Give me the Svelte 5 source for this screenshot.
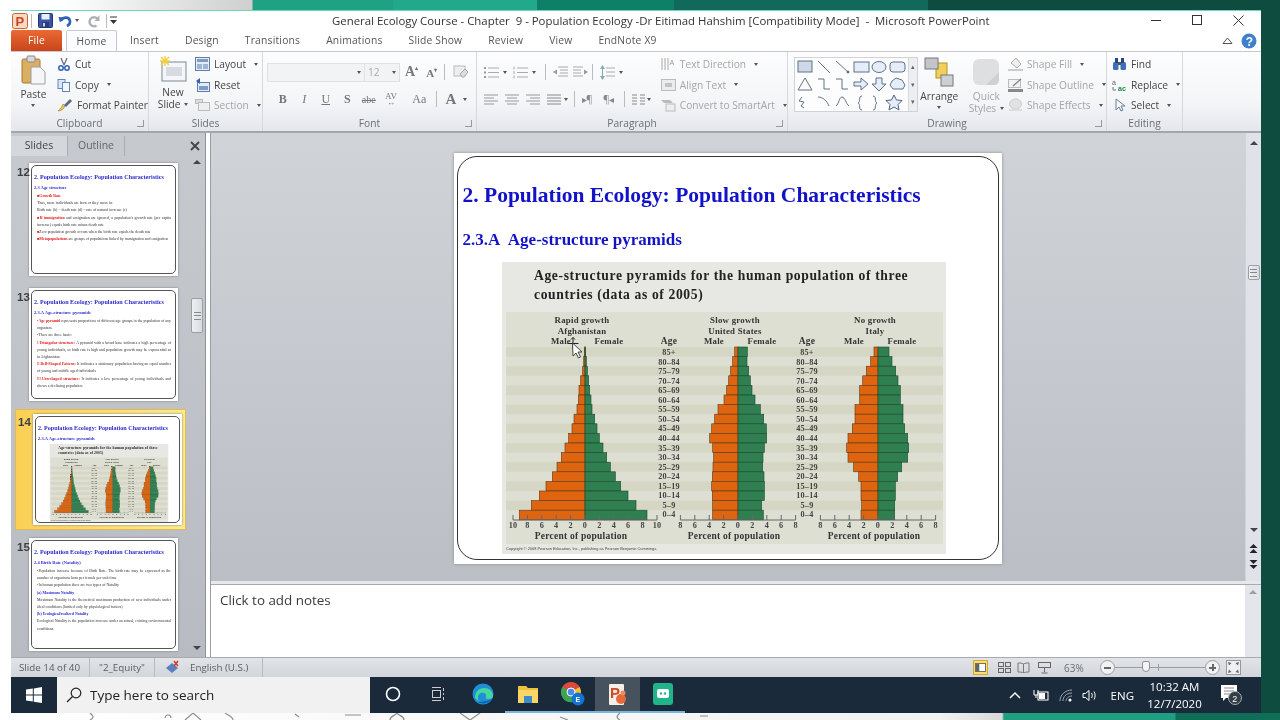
<script>
  const ages = ["85+","80–84","75–79","70–74","65–69","60–64","55–59","50–54","45–49","40–44","35–39","30–34","25–29","20–24","15–19","10–14","5–9","0–4"];
  // bar half widths in px, top row first
  const pyramids = [
    { cx: 83, span: 5, title: "Rapid growth", place: "Afghanistan",
      male: [0.7,1.3,2.3,4.3,6,6.7,8,11,13,16.3,20,23.7,28,32.7,39,45.7,53.7,65.7],
      female: [0.7,1.3,2.3,3.7,4.7,6,7,9.7,12,14.3,18,21.7,25.3,30.3,35.7,43,51,62] },
    { cx: 236, span: 4, title: "Slow growth", place: "United States",
      male: [3.3,5.3,7.3,9.3,11.3,14,20,23.3,26.3,28.3,25.3,24.3,25,25.7,26.3,25.7,25.3,25.3],
      female: [9.3,9,10.7,12.3,14,17,22.3,25.7,28.3,28.7,26.3,25,24.7,26,26.3,26.3,23.7,25.3] },
    { cx: 376, span: 4, title: "No growth", place: "Italy",
      male: [4,7.3,11.7,15.3,18.3,18.3,23,23,25.7,30,31.3,30,24.3,19.3,17,17,16.3,17],
      female: [11,14,17.7,20,22.3,22.3,25,25,26.7,29.7,30.7,29.7,23.7,19.7,17.3,17.3,16.7,16.7] }
  ];
  const ageCols = [167, 305];

  const tabs = ["Insert","Design","Transitions","Animations","Slide Show","Review","View","EndNote X9"];

  const thumbs = [
    { n: 12, sub: "2.3 Age structure", paras: [
      { b: "■", red: "Growth Rate", t: "" },
      { t: "Thus, more individuals are born or they move in." },
      { t: "Birth rate (b) − death rate (d) = rate of natural increase (r)" },
      { b: "■", red: "If immigration", t: " and emigration are ignored, a population's growth rate (per capita increase) equals birth rate minus death rate" },
      { b: "■", t: "Zero population growth occurs when the birth rate equals the death rate" },
      { b: "■", red: "Metapopulations", t: " are groups of populations linked by immigration and emigration" }
    ]},
    { n: 13, sub: "2.3.A Age-structure pyramids", paras: [
      { b: "•", red: "Age pyramid", t: " represents proportions of different age groups in the population of any organism." },
      { b: "•", t: "There are three basic:" },
      { b: "I.", red: "Triangular structure:", t: " A pyramid with a broad base indicates a high percentage of young individuals, so birth rate is high and population growth may be exponential as in Afghanistan" },
      { b: "II.", red: "Bell-Shaped Pattern:", t: " It indicates a stationary population having an equal number of young and middle aged individuals" },
      { b: "III.", red: "Urn-shaped structure:", t: " It indicates a low percentage of young individuals and shows a declining population" }
    ]},
    { n: 14, sub: "2.3.A Age-structure pyramids", active: true },
    { n: 15, sub: "2.4 Birth Rate (Natality)", paras: [
      { b: "•", t: "Population increase because of Birth Rate. The birth rate may be expressed as the number of organisms born per female per unit time" },
      { b: "•", t: "In human population there are two types of Natality" },
      { blue: "(a) Maximum Natality", t: "" },
      { t: "Maximum Natality is the theoretical maximum production of new individuals under ideal conditions (limited only by physiological factors)" },
      { blue: "(b) Ecological/realized Natality", t: "" },
      { t: "Ecological Natality is the population increase under an actual, existing environmental conditions." }
    ]}
  ];
</script>

{#snippet chart(cursor)}
  <svg class="chart" viewBox="0 0 444 292">
    <rect width="444" height="292" fill="#e7e7e4" />
    <rect x="4" y="50" width="437" height="232" fill="#dedfd3" />
    {#each ages as _, i}
      {#if i % 2 === 0}
        <rect x="4" y={85 + i * 9.6} width="437" height="9.6" fill="#d5d6c4" />
      {/if}
    {/each}
    <text class="cap" x="32" y="18">Age-structure pyramids for the human population of three</text>
    <text class="cap" x="32" y="37">countries (data as of 2005)</text>
    {#each pyramids as p}
      <text class="lbl" x={p.cx - 3} y="61" text-anchor="middle">{p.title}</text>
      <text class="lbl" x={p.cx - 3} y="71.5" text-anchor="middle">{p.place}</text>
      <text class="lbl" x={p.cx - 24} y="82" text-anchor="middle">Male</text>
      <text class="lbl" x={p.cx + 24} y="82" text-anchor="middle">Female</text>
      {#each ages as _, i}
        <rect x={p.cx - p.male[i]} y={85 + i * 9.6} width={p.male[i]} height="9.6" fill="#df6410" stroke="#5a3a18" stroke-width=".6" />
        <rect x={p.cx} y={85 + i * 9.6} width={p.female[i]} height="9.6" fill="#2f7f50" stroke="#1d4a30" stroke-width=".6" />
      {/each}
      <path d="M{p.cx - p.span * 14.4} 258H{p.cx + p.span * 14.4}" stroke="#666" stroke-width="1" />
      {#each Array(p.span * 2 + 1) as _, k}
        <path d="M{p.cx + (k - p.span) * 14.4} 253V258" stroke="#666" stroke-width="1" />
        <text class="tick" x={p.cx + (k - p.span) * 14.4} y="265.5" text-anchor="middle">{Math.abs(k - p.span) * 2}</text>
      {/each}
      <text class="lbl pct" x={p.cx - 4} y="277" text-anchor="middle">Percent of population</text>
    {/each}
    {#each ageCols as x}
      <text class="lbl age" {x} y="82" text-anchor="middle">Age</text>
      {#each ages as a, i}
        <text class="tick" {x} y={93 + i * 9.55} text-anchor="middle">{a}</text>
      {/each}
    {/each}
    <text class="copy" x="4" y="288">Copyright © 2008 Pearson Education, Inc., publishing as Pearson Benjamin Cummings.</text>
    {#if cursor}
      <path d="M71 81.5v-6l-2 2M71 75.5l2 2M71 81.5v5.5M65.5 81.5h11" stroke="#222" stroke-width="1" fill="none" />
      <path d="M70.5 81l.5 13 3-3 2.5 5 2-1-2.5-5h4z" fill="#fff" stroke="#333" stroke-width=".9" />
    {/if}
  </svg>
{/snippet}

{#snippet thumb(t)}
  <div class="thumb-row" class:active={t.active}>
    <span class="num">{t.n}</span>
    <div class="mini">
      <div class="mini-in">
        <p class="mini-title">2. Population Ecology: Population Characteristics</p>
        <p class="mini-sub">{t.sub}</p>
        {#if t.active}
          <div class="mini-chart">{@render chart(false)}</div>
        {:else}
          <div class="mini-body">
            {#each t.paras as p}
              <p>{#if p.b}<i>{p.b}</i> {/if}{#if p.red}<span class="r">{p.red}</span>{/if}{#if p.blue}<span class="bl">{p.blue}</span>{/if}{p.t}</p>
            {/each}
          </div>
        {/if}
      </div>
    </div>
  </div>
{/snippet}

{#snippet caret()}<span class="caret"></span>{/snippet}

<div class="screen">
  <div class="wall-top"></div>
  <div class="gutter"></div>

  <div class="win">
    <header class="titlebar">
      <div class="qat">
        <svg width="16" height="16" viewBox="0 0 16 16"><rect x=".5" y=".5" width="15" height="15" rx="2" fill="#f6d9c6" stroke="#d2622a"/><text x="3.5" y="13" class="plogo">P</text></svg>
        <i class="vsep"></i>
        <svg class="q-save" width="15" height="15" viewBox="0 0 15 15"><rect x=".5" y=".5" width="14" height="14" rx="1" fill="#3a55a8" stroke="#23366f"/><rect x="3.5" y="1" width="8" height="5.5" fill="#e9eef7"/><rect x="4" y="9" width="7" height="5.5" fill="#2a3c78"/><rect x="5" y="10" width="2" height="3.5" fill="#c9d3ea"/></svg>
        <svg class="q-undo" width="14" height="14" viewBox="0 0 14 14"><path d="M3 7c1-4 8-5 9 0 .4 2.500-1 4-3 5" fill="none" stroke="#2c62b8" stroke-width="2.600"/><path d="M.5 3l6 .5-4.500 5z" fill="#2c62b8"/></svg>
        {@render caret()}
        <svg class="q-redo" width="14" height="14" viewBox="0 0 14 14"><path d="M11 5.500A4.500 4.500 0 1 0 9.500 11.500" fill="none" stroke="#aeb2b6" stroke-width="2.400"/><path d="M12.500 1v6h-5z" fill="#aeb2b6"/></svg>
        <i class="vsep s2"></i>
        <svg class="q-cust" width="8" height="9" viewBox="0 0 8 9"><path d="M0 1h7" stroke="#333"/><path d="M0 4h7L3.500 8z" fill="#333"/></svg>
      </div>
      <div class="doc-title">General Ecology Course - Chapter &nbsp;9 - Population Ecology -Dr Eitimad Hahshim [Compatibility Mode] &nbsp;- &nbsp;Microsoft PowerPoint</div>
      <div class="winbtns">
        <svg width="11" height="11" viewBox="0 0 11 11"><path d="M0 5.500h10" stroke="#333"/></svg>
        <svg width="11" height="11" viewBox="0 0 11 11"><rect x=".5" y=".5" width="9" height="9" fill="none" stroke="#333"/></svg>
        <svg width="11" height="11" viewBox="0 0 11 11"><path d="M.5.500l10 10M10.500.500l-10 10" stroke="#333"/></svg>
      </div>
    </header>

    <nav class="tabbar">
      <span class="file">File</span>
      <span class="tab home">Home</span>
      {#each tabs as t}<span class="tab">{t}</span>{/each}
      <span class="tab-right">
        <svg width="11" height="8" viewBox="0 0 11 8"><path d="M1 6.500 5.500 1 10 6.500z" fill="none" stroke="#555"/></svg>
        <svg width="16" height="16" viewBox="0 0 16 16"><circle cx="8" cy="8" r="7.500" fill="#3f7fcf"/><text x="4.800" y="12.500" class="help">?</text></svg>
      </span>
    </nav>

    <section class="ribbon">
      <div class="group clip">
        <div class="gbody">
          <div class="big paste">
            <svg width="25" height="30" viewBox="0 0 25 30"><rect x="1" y="4" width="18" height="24" rx="1.500" fill="#dcae62" stroke="#a47a34"/><rect x="6" y="1" width="8" height="6" rx="1" fill="#d8d8d8" stroke="#888"/><path d="M10 12h9l5 5v12H10z" fill="#f5f6f8" stroke="#9aa0a8"/></svg>
            <span>Paste</span>{@render caret()}
          </div>
          <div class="stack">
            <div class="item"><svg width="14" height="14" viewBox="0 0 14 14"><path d="M4 1l3 7M10 1 7 8" stroke="#667" stroke-width="1.200"/><circle cx="4" cy="11" r="2.200" fill="none" stroke="#2f5fb0" stroke-width="1.500"/><circle cx="10" cy="11" r="2.200" fill="none" stroke="#2f5fb0" stroke-width="1.500"/></svg><span>Cut</span></div>
            <div class="item"><svg width="14" height="14" viewBox="0 0 14 14"><rect x="1" y="1.500" width="7" height="9" fill="#dbe6f5" stroke="#5f86bd"/><rect x="5.500" y="4.500" width="7" height="9" fill="#f3f6fb" stroke="#5f86bd"/></svg><span>Copy</span>{@render caret()}</div>
            <div class="item"><svg width="16" height="14" viewBox="0 0 16 14"><path d="M1 13c3 0 6-2 7-5L6 6c-1 3-3 5-5 7z" fill="#e6c65e" stroke="#9b7d27" stroke-width=".6"/><path d="M7 7l6-6 2 2-6 6z" fill="#5a6a80"/></svg><span>Format Painter</span></div>
          </div>
        </div>
        <div class="glabel">Clipboard<i class="launch"></i></div>
      </div>

      <div class="group slides">
        <div class="gbody">
          <div class="big newslide">
            <svg width="28" height="27" viewBox="0 0 28 27"><rect x="3" y="6" width="24" height="19" fill="#f4f6f9" stroke="#7d8793"/><rect x="7" y="11" width="16" height="9" fill="#d7dbe1"/><path d="M6 0v10M1 5h10M2 1l8 8M10 1 2 9" stroke="#f3d03c" stroke-width="1.400"/></svg>
            <span>New</span><span>Slide <u class="caret"></u></span>
          </div>
          <div class="stack">
            <div class="item"><svg width="15" height="14" viewBox="0 0 15 14"><rect x=".5" y=".5" width="14" height="13" fill="#e3ecf7" stroke="#5f7fa8"/><rect x="2" y="2" width="11" height="3" fill="#7d9cc5"/><rect x="2" y="7" width="5" height="5" fill="#9db4d5"/><rect x="8" y="7" width="5" height="5" fill="#9db4d5"/></svg><span>Layout</span>{@render caret()}</div>
            <div class="item"><svg width="15" height="14" viewBox="0 0 15 14"><rect x="2.500" y="4.500" width="12" height="9" fill="#e3ecf7" stroke="#5f7fa8"/><rect x="4" y="8" width="9" height="4" fill="#7d9cc5"/><path d="M1 3l4-3v6z" fill="#2c62b8"/></svg><span>Reset</span></div>
            <div class="item off"><svg width="15" height="14" viewBox="0 0 15 14"><rect x=".5" y="1.500" width="7" height="4" fill="#ddd" stroke="#bbb"/><rect x="3.500" y="4.500" width="11" height="8" fill="#eee" stroke="#bbb"/></svg><span>Section</span>{@render caret()}</div>
          </div>
        </div>
        <div class="glabel">Slides</div>
      </div>

      <div class="group font">
        <div class="gbody col">
          <div class="row1">
            <div class="combo name">{@render caret()}</div>
            <div class="combo size"><span>12</span>{@render caret()}</div>
            <span class="fa big-a">A<sup>▴</sup></span>
            <span class="fa small-a">A<sup>▾</sup></span>
            <i class="vsep tall"></i>
            <svg class="clearfmt" width="16" height="15" viewBox="0 0 16 15"><rect x="1" y="1" width="11" height="10" fill="#eee" stroke="#bbb"/><path d="M7 9l5-5 3 3-4 5H9z" fill="#ddd" stroke="#aaa"/></svg>
          </div>
          <div class="row2">
            <b class="f">B</b><em class="f">I</em><u class="f">U</u><span class="f strong">S</span><s class="f abe">abe</s>
            <span class="f av">AV<small>↔</small></span><span class="f aa">Aa</span>
            <i class="vsep tall"></i>
            <span class="f acol">A</span><span class="caret c-a"></span>
          </div>
        </div>
        <div class="glabel">Font<i class="launch"></i></div>
      </div>

      <div class="group para">
        <div class="gbody">
          <div class="pcol">
            <div class="row1 p">
              <svg width="17" height="13" viewBox="0 0 17 13"><g stroke="#aaa"><path d="M5 2h11M5 6.500h11M5 11h11"/></g><g fill="#999"><rect x="1" y="1" width="2" height="2"/><rect x="1" y="5.500" width="2" height="2"/><rect x="1" y="10" width="2" height="2"/></g></svg>{@render caret()}
              <svg width="17" height="13" viewBox="0 0 17 13"><g stroke="#aaa"><path d="M5 2h11M5 6.500h11M5 11h11M2 .500v3M2 5v3M2 9.500v3"/></g></svg>{@render caret()}
              <i class="vsep tall"></i>
              <svg width="15" height="13" viewBox="0 0 15 13"><path d="M5 1h10M7 4h8M7 7h8M5 10h10" stroke="#aaa"/><path d="M4 3.500v5L0 6z" fill="#999"/></svg>
              <svg width="15" height="13" viewBox="0 0 15 13"><path d="M0 1h10M0 4h8M0 7h8M0 10h10" stroke="#aaa"/><path d="M11 3.500v5L15 6z" fill="#999"/></svg>
              <i class="vsep tall"></i>
              <svg width="16" height="15" viewBox="0 0 16 15"><path d="M6 3h9M6 7h9M6 11h9" stroke="#aaa"/><path d="M2.500 0 5 4H0zM2.500 15 5 11H0z" fill="#8aa"/><path d="M2.500 3v9" stroke="#8aa"/></svg>{@render caret()}
            </div>
            <div class="row2 p">
              <svg width="15" height="11" viewBox="0 0 15 11"><path d="M0 1h14M0 4h10M0 7h14M0 10h10" stroke="#999"/></svg>
              <svg width="15" height="11" viewBox="0 0 15 11"><path d="M0 1h14M2 4h10M0 7h14M2 10h10" stroke="#999"/></svg>
              <svg width="15" height="11" viewBox="0 0 15 11"><path d="M0 1h14M4 4h10M0 7h14M4 10h10" stroke="#999"/></svg>
              <svg width="15" height="11" viewBox="0 0 15 11"><path d="M0 1h14M0 4h14M0 7h14M0 10h14" stroke="#888"/></svg>{@render caret()}
              <i class="vsep tall"></i>
              <span class="pil">▸¶</span><span class="pil">¶◂</span>
              <i class="vsep tall"></i>
              <svg width="13" height="11" viewBox="0 0 13 11"><path d="M0 1h5M0 4h5M0 7h5M0 10h5M8 1h5M8 4h5M8 7h5M8 10h5" stroke="#888"/></svg>{@render caret()}
            </div>
          </div>
          <div class="stack narrow">
            <div class="item off"><svg width="15" height="14" viewBox="0 0 15 14"><path d="M1 1v12M4 1v12M7 1v12" stroke="#aaa"/><text x="8.500" y="8" class="tiny">A</text></svg><span>Text Direction</span>{@render caret()}</div>
            <div class="item off"><svg width="15" height="14" viewBox="0 0 15 14"><rect x=".5" y="1.500" width="14" height="11" fill="#ececec" stroke="#bbb"/><path d="M4 6h7M4 8h7" stroke="#999"/></svg><span>Align Text</span>{@render caret()}</div>
            <div class="item off"><svg width="15" height="14" viewBox="0 0 15 14"><path d="M0 2h9l3 3H3z" fill="#bbb"/><rect x="5" y="6" width="9" height="7" fill="#eee" stroke="#bbb"/></svg><span>Convert to SmartArt</span>{@render caret()}</div>
          </div>
        </div>
        <div class="glabel">Paragraph<i class="launch"></i></div>
      </div>

      <div class="group draw">
        <div class="gbody">
          <div class="gallery">
            <svg width="112" height="52" viewBox="0 0 112 52" fill="#e4edf8" stroke="#5f7287">
              <rect x="2" y="2" width="14" height="11" fill="#cfd8e6"/><path d="M22 2l12 12M40 2l12 11"/><circle cx="52" cy="13" r="1" fill="#333"/>
              <rect x="58" y="3" width="15" height="10"/><ellipse cx="83" cy="8" rx="7" ry="5.500"/><rect x="94" y="3" width="15" height="10" rx="3"/>
              <path d="M2 31l7-12 7 12zM22 20h6v10h6" fill="none"/><path d="M40 20h6v10h6" fill="none"/>
              <path d="M58 23h7v-4l7 6-7 6v-4h-7zM80 19h6v6h4l-7 7-7-7h4zM96 22l4-3 6 2 3 5-2 4H97l-3-4z"/>
              <path d="M6 38l-3 4 5 1-3 4 3 2M22 38c5 0 9 4 11 9M40 47c3-2 3-9 6-9s4 7 7 9" fill="none"/>
              <path d="M66 37c-4 0-1 6-4 7 3 1 0 7 4 7M77 37c4 0 1 6 4 7-3 1 0 7-4 7" fill="none"/>
              <path d="M98 36l2.500 5 5.500.5-4 4 1 5.500-5-3-5 3 1-5.500-4-4 5.500-.5z" stroke="#4d6585"/>
            </svg>
            <div class="gal-scroll"><span>▴</span><span>▾</span><span class="more">▾</span></div>
          </div>
          <div class="big arrange">
            <svg width="30" height="30" viewBox="0 0 30 30"><rect x="12" y="6" width="11" height="15" fill="#f1cf5a" stroke="#b3902a"/><rect x="1" y="1" width="13" height="11" fill="#c2c6cc" stroke="#777"/><rect x="17" y="18" width="12" height="11" fill="#ccd0d4" stroke="#777"/></svg>
            <span>Arrange</span>{@render caret()}
          </div>
          <div class="big quick">
            <svg width="28" height="28" viewBox="0 0 28 28"><rect x="1" y="1" width="26" height="26" rx="6" fill="#dedfe1"/><path d="M27 14 14 27h8q5 0 5-5z" fill="#cfd0d3"/></svg>
            <span>Quick</span><span>Styles <u class="caret"></u></span>
          </div>
          <div class="stack shape">
            <div class="item off"><svg width="15" height="14" viewBox="0 0 15 14"><path d="M3 6l5-5 5 6-4 4z" fill="#eee" stroke="#aaa"/><rect x="0" y="12" width="15" height="2" fill="#ccc"/></svg><span>Shape Fill</span>{@render caret()}</div>
            <div class="item off"><svg width="15" height="14" viewBox="0 0 15 14"><rect x=".5" y="1.500" width="12" height="8" fill="#f2f2f2" stroke="#bbb"/><path d="M5 8l8-7" stroke="#888" stroke-width="1.500"/><rect x="0" y="11" width="15" height="3" fill="#888"/></svg><span>Shape Outline</span>{@render caret()}</div>
            <div class="item off"><svg width="15" height="14" viewBox="0 0 15 14"><ellipse cx="7.500" cy="6" rx="6" ry="5" fill="#e2e2e2" stroke="#ccc"/><rect x="1" y="11" width="13" height="2" fill="#ddd"/></svg><span>Shape Effects</span>{@render caret()}</div>
          </div>
        </div>
        <div class="glabel">Drawing<i class="launch"></i></div>
      </div>

      <div class="group edit">
        <div class="gbody">
          <div class="stack">
            <div class="item"><svg width="15" height="14" viewBox="0 0 15 14"><rect x="1" y="5" width="5.500" height="8" rx="1.500" fill="#3f6fb8"/><rect x="8.500" y="5" width="5.500" height="8" rx="1.500" fill="#3f6fb8"/><rect x="3" y="1" width="3" height="5" fill="#26467e"/><rect x="9" y="1" width="3" height="5" fill="#26467e"/><rect x="6" y="5" width="3" height="3" fill="#555"/></svg><span>Find</span></div>
            <div class="item"><svg width="15" height="14" viewBox="0 0 15 14"><text x="0" y="7" class="tiny dk">a</text><text x="6" y="13" class="tiny gr">ac</text><path d="M1 9v3h3" fill="none" stroke="#777"/></svg><span>Replace</span>{@render caret()}</div>
            <div class="item"><svg width="15" height="14" viewBox="0 0 15 14"><path d="M4 1v11l3-3 2 4 2-1-2-4h4z" fill="#f4f6fa" stroke="#6a7f9c"/></svg><span>Select</span>{@render caret()}</div>
          </div>
        </div>
        <div class="glabel">Editing</div>
      </div>
    </section>

    <div class="work">
      <aside class="pane">
        <div class="pane-tabs">
          <span class="ptab on">Slides</span>
          <span class="ptab">Outline</span>
          <svg class="pclose" width="10" height="10" viewBox="0 0 10 10"><path d="M1 1l8 8M9 1 1 9" stroke="#444" stroke-width="1.800"/></svg>
        </div>
        <div class="pane-main">
          <div class="thumbs">
            {#each thumbs as t}{@render thumb(t)}{/each}
          </div>
          <div class="vscroll small">
            <span class="arr up"></span>
            <span class="sthumb"><i></i></span>
            <span class="arr down"></span>
          </div>
        </div>
      </aside>

      <div class="right">
        <div class="canvas-row">
          <div class="canvas">
            <div class="slide">
              <div class="slide-in">
                <h1>2. Population Ecology: Population Characteristics</h1>
                <h2>2.3.A &nbsp;Age-structure pyramids</h2>
                <div class="figure">{@render chart(true)}</div>
              </div>
            </div>
          </div>
          <div class="vscroll main">
            <span class="arr up"></span>
            <span class="sthumb"><i></i></span>
            <span class="arr down"></span>
            <span class="dbl">
              <svg width="9" height="10" viewBox="0 0 9 10"><path d="M4.500 0 8.500 4H.5zM4.500 5 8.500 9H.5z" fill="#222"/></svg>
              <svg width="9" height="10" viewBox="0 0 9 10"><path d="M4.500 10 8.500 6H.5zM4.500 5 8.500 1H.5z" fill="#222"/></svg>
            </span>
          </div>
        </div>
        <div class="notes-row">
          <div class="notes">Click to add notes</div>
          <div class="vscroll note"><span class="arr up"></span></div>
        </div>
      </div>
    </div>

    <footer class="status">
      <span class="st a">Slide 14 of 40</span>
      <span class="st b">"2_Equity"</span>
      <span class="st c"><svg width="15" height="15" viewBox="0 0 15 15"><path d="M1 8l6-5 6 5-6 5z" fill="#5c7fc0"/><path d="M9 1l4 5M13 1 9 6" stroke="#d63a2a" stroke-width="1.600"/></svg></span>
      <span class="st d">English (U.S.)</span>
      <span class="st-right">
        <span class="view on"><svg width="13" height="11" viewBox="0 0 13 11"><rect x=".5" y=".5" width="12" height="10" fill="#fff" stroke="#555"/><rect x="1" y="1" width="4" height="9" fill="#666"/></svg></span>
        <svg class="v2" width="13" height="11" viewBox="0 0 13 11" fill="none" stroke="#666"><rect x=".5" y=".5" width="5" height="4"/><rect x="7.500" y=".5" width="5" height="4"/><rect x=".5" y="6.500" width="5" height="4"/><rect x="7.500" y="6.500" width="5" height="4"/></svg>
        <svg class="v3" width="13" height="11" viewBox="0 0 13 11" fill="none" stroke="#777"><path d="M6.500 2C5 1 3 1 1 1v9c2 0 4 0 5.500 1 1.500-1 3.500-1 5.500-1V1c-2 0-4 0-5.500 1zM6.500 2v9"/></svg>
        <svg class="v4" width="13" height="12" viewBox="0 0 13 12" fill="none" stroke="#666"><rect x=".5" y=".5" width="12" height="5"/><path d="M6.500 6v4M3.500 11h6"/></svg>
        <span class="pct">63%</span>
        <span class="zoomb"></span>
        <span class="slider"><i class="tick"></i><i class="knob"></i></span>
        <span class="zoomb plus"></span>
        <svg class="fit" width="15" height="15" viewBox="0 0 15 15"><rect x=".5" y=".5" width="14" height="14" fill="#eef0f3" stroke="#999"/><path d="M2 2l3.500 1-2.500 2.500zM13 2l-3.500 1L12 5.500zM2 13l3.500-1-2.500-2.500zM13 13l-3.500-1 2.500-2.500z" fill="#666"/></svg>
      </span>
    </footer>
  </div>

  <div class="wall-right"></div>
  <div class="gutter"></div>

  <div class="taskbar">
    <span class="start"><svg width="16" height="16" viewBox="0 0 16 16" fill="#fff"><path d="M0 2.500 6.800 1.500v6H0zM7.800 1.400 16 0v7.500H7.800zM0 8.500h6.800v6L0 13.500zM7.800 8.500H16V16l-8.200-1.300z"/></svg></span>
    <div class="search">
      <svg width="16" height="16" viewBox="0 0 16 16" fill="none" stroke="#222" stroke-width="1.200"><circle cx="10" cy="6" r="4.800"/><path d="M6.500 9.500 1 15"/></svg>
      <span>Type here to search</span>
    </div>
    <div class="tb-icons">
      <span class="tb"><svg width="16" height="16" viewBox="0 0 16 16"><circle cx="8" cy="8" r="6.500" fill="none" stroke="#fff" stroke-width="1.600"/></svg></span>
      <span class="tb"><svg width="16" height="16" viewBox="0 0 16 16" fill="none" stroke="#ccc"><rect x="2.500" y="4.500" width="8" height="7"/><path d="M2 1.500h9M2 14.500h9M13.500 2v3M13.500 7v2M13.500 11v3"/></svg></span>
      <span class="tb"><svg width="22" height="22" viewBox="0 0 22 22"><circle cx="11" cy="11" r="10.500" fill="#1f8fd6"/><path d="M3 15c0-6 4-10 9-10 5 0 9 3 9 8 0 2-2 3-5 3-2 0-3-1-2-2 1-3-2-5-5-4-3 1-4 5-2 8-2-1-3-2-4-3z" fill="#46d6a0"/><path d="M6 19c5 3 11 1 14-3-3 2-9 3-14 3z" fill="#0f5fae"/></svg></span>
      <span class="tb"><svg width="20" height="18" viewBox="0 0 20 18"><path d="M0 1h8l2 2h10v15H0z" fill="#f0c040"/><rect x="0" y="5" width="20" height="13" fill="#f7d668"/><rect x="6" y="11" width="8" height="7" fill="#3d8cc9"/></svg></span>
      <span class="tb"><svg width="24" height="24" viewBox="0 0 24 24"><circle cx="10" cy="10" r="10" fill="#d94a3a"/><path d="M10 10 1.500 5A10 10 0 0 1 18.500 5z" fill="#d94a3a"/><path d="M10 10 18.500 5A10 10 0 0 1 12 20z" fill="#f2c230"/><path d="M10 10 12 20A10 10 0 0 1 1.500 5z" fill="#3aa655"/><circle cx="10" cy="10" r="4" fill="#4a8af0" stroke="#fff"/><circle cx="17" cy="17" r="6.500" fill="#1273d0"/><text x="14.500" y="20" class="e">E</text></svg></span>
      <span class="tb on"><svg width="18" height="21" viewBox="0 0 18 21"><rect x="0" y="0" width="15" height="21" rx="1" fill="#f6efe9"/><text x="1" y="14" class="pp">P</text><circle cx="12" cy="15" r="5" fill="#e9683a"/><circle cx="14" cy="9" r="2.500" fill="#ee8a5f"/></svg></span>
      <span class="tb"><svg width="20" height="22" viewBox="0 0 20 22"><rect width="20" height="22" rx="3" fill="#21b38a"/><rect x="4" y="6" width="12" height="9" rx="2" fill="#fff"/><circle cx="8" cy="10.500" r="1.200" fill="#21b38a"/><circle cx="12" cy="10.500" r="1.200" fill="#21b38a"/></svg></span>
    </div>
    <div class="tray">
      <svg width="12" height="8" viewBox="0 0 12 8"><path d="M1 7l5-5 5 5" fill="none" stroke="#fff" stroke-width="1.500"/></svg>
      <svg class="t-batt" width="16" height="12" viewBox="0 0 16 12"><rect x="5" y="3" width="10" height="8" fill="none" stroke="#fff"/><rect x="6" y="4" width="6" height="6" fill="#fff"/><path d="M1 1v5h4V1M3 6v3" stroke="#fff" fill="none"/></svg>
      <svg class="t-wifi" width="14" height="13" viewBox="0 0 14 13" fill="none" stroke="#9aa3ad"><path d="M1 12c0-6 5-11 12-11M4 12c0-4 3-8 9-8M7 12c0-2 2-5 6-5"/><circle cx="11" cy="11" r="1.500" fill="#fff" stroke="none"/></svg>
      <svg class="t-vol" width="15" height="13" viewBox="0 0 15 13" fill="none" stroke="#fff"><path d="M1 4.500v4h2.500L7 11.500v-10L3.500 4.500zM9.500 4c1 1.500 1 3.500 0 5M12 2.500c1.500 2.500 1.500 5.500 0 8"/></svg>
      <span class="eng">ENG</span>
      <span class="clock"><span>10:32 AM</span><span>12/7/2020</span></span>
      <svg class="t-note" width="24" height="22" viewBox="0 0 24 22"><path d="M1 1h16v13H6l-3 3v-3H1z" fill="#fff"/><path d="M4 4h10M4 7h10M4 10h7" stroke="#8a8f96"/><circle cx="15" cy="14" r="6.500" fill="#333d47" stroke="#aaa"/><text x="12.300" y="17.500" class="badge">2</text></svg>
    </div>
  </div>

  <div class="wall-right"></div>

  <div class="wall-bottom">
    <svg width="1000" height="7" viewBox="0 0 1000 7" fill="none" stroke="#8a8f92" stroke-width="1.200">
      <path d="M90 0c4 3 4 5 0 7M165 5a3 3 0 0 1 6 0M185 7l8-7 8 7M225 0c4 3 8 4 8 7M295 1l4 3M345 2h16M390 7c0-4 5-4 7-7 2 3 7 3 7 7M460 0l10 7 10-7M560 4l8 3M620 0c-4 3-4 5 0 7M700 3h8"/>
    </svg>
  </div>
</div>

<style>
  :global(body) {
    margin: 0;
    background: #fff;
  }
  :global(p), :global(h1), :global(h2) { margin: 0; }

  .screen {
    width: 1280px;
    height: 720px;
    overflow: hidden;
    display: grid;
    grid-template-columns: 11px 1250px 19px;
    grid-template-rows: 10px 667px 36px 7px;
    font-family: "Open Sans", "Noto Sans", sans-serif;
    color: #454545;
    filter: blur(.4px);
    background: #fff;
  }
  .wall-top {
    grid-column: 1 / 4;
    background: linear-gradient(90deg, #fff 0, #fff 60px, #cfcfcf 252px, #1fa283 253px, #1fa283 393px, #22a88a 393px, #22a88a 537px, #0e8068 537px, #0e8068 674px, #10695a 674px, #10695a 928px, #0e4c40 928px);
  }
  .gutter { background: #fff; }
  .wall-right { background: #0e4c40; }
  .wall-bottom {
    grid-column: 1 / 4;
    overflow: hidden;
    background: linear-gradient(90deg, #fff 0, #f2f2f2 940px, #d8d8d8 1002px, #1f9e80 1004px, #1f9e80 1175px, #0f6d58 1176px);
  }
  .wall-bottom svg { display: block; }

  .win {
    display: flex;
    flex-direction: column;
    background: #fff;
    border-top: 1px solid #6fd5bd;
    box-sizing: border-box;
  }

  /* title bar */
  .titlebar {
    height: 19px;
    display: flex;
    align-items: center;
    font-size: 11.400px;
    color: #333;
  }
  .qat {
    width: 321px;
    display: flex;
    align-items: center;
    padding-left: 1px;
    box-sizing: border-box;
  }
  .qat svg { flex: none; }
  .plogo { font: bold 13px "Liberation Sans", sans-serif; fill: #c8471d; }
  .vsep { display: block; width: 1px; height: 14px; background: #bbb; flex: none; }
  .qat .vsep { margin-left: 3px; }
  .q-save { margin-left: 6px; }
  .q-undo { margin-left: 5px; }
  .qat .caret { margin-left: 3px; }
  .q-redo { margin-left: 8px; }
  .qat .s2 { margin-left: 5px; }
  .q-cust { margin-left: 3px; }
  .doc-title { flex: 1; white-space: nowrap; }
  .winbtns {
    display: flex;
    gap: 30px;
    align-items: center;
    padding-right: 17px;
  }

  .caret {
    display: inline-block;
    width: 0;
    height: 0;
    border: 2.500px solid transparent;
    border-top: 3px solid #555;
    border-bottom: 0;
    margin-left: 4px;
    vertical-align: middle;
    text-decoration: none;
    flex: none;
  }

  /* tabs */
  .tabbar {
    height: 21px;
    display: flex;
    align-items: stretch;
    font-size: 10.300px;
    letter-spacing: .2px;
    position: relative;
  }
  .file {
    width: 51px;
    background: linear-gradient(#ea6a34, #c9441b);
    color: #fff;
    text-align: center;
    line-height: 21px;
    border-radius: 2px 2px 0 0;
    margin-right: 4px;
  }
  .tab {
    line-height: 21px;
    margin-right: 26px;
    white-space: nowrap;
    color: #555;
  }
  .tab.home {
    width: 51px;
    box-sizing: border-box;
    text-align: center;
    border: 1px solid #c5c9cf;
    border-bottom: 0;
    background: #fbfcfd;
    border-radius: 2px 2px 0 0;
    margin-right: 13px;
    line-height: 20px;
  }
  .tab-right {
    margin-left: auto;
    display: flex;
    align-items: center;
    gap: 8px;
    padding-right: 4px;
  }
  .help { font: bold 12px "Liberation Sans", sans-serif; fill: #fff; }

  /* ribbon */
  .ribbon {
    height: 79px;
    display: flex;
    background: linear-gradient(#fdfdfe, #f3f5f7 65%, #e4e7eb);
    border-top: 1px solid #c5c9cf;
    border-bottom: 2px solid #a3a7ad;
    box-sizing: content-box;
    font-size: 10.200px;
    flex: none;
  }
  .group {
    display: flex;
    flex-direction: column;
    border-right: 1px solid #d5d8dd;
    box-sizing: border-box;
    flex: none;
  }
  .clip { width: 138px; }
  .slides { width: 114px; }
  .font { width: 214px; }
  .para { width: 311px; }
  .draw { width: 319px; }
  .edit { width: 76px; }
  .gbody { flex: 1; display: flex; min-height: 0; }
  .gbody.col { flex-direction: column; }
  .glabel {
    height: 15px;
    line-height: 14px;
    text-align: center;
    color: #6a6f76;
    position: relative;
    font-size: 10.200px;
  }
  .launch {
    position: absolute;
    right: 4px;
    top: 4px;
    width: 6px;
    height: 6px;
    border-right: 1px solid #999;
    border-bottom: 1px solid #999;
  }
  .big {
    display: flex;
    flex-direction: column;
    align-items: center;
    line-height: 11.500px;
  }
  .big .caret { margin: 3px 0 0; }
  .big u.caret { margin: 0 0 0 1px; }
  .big svg { margin-bottom: 4px; flex: none; }
  .paste { width: 45px; padding-top: 3px; }
  .newslide { width: 46px; padding: 4px 0 0 2px; box-sizing: border-box; }
  .stack {
    display: flex;
    flex-direction: column;
    padding-top: 2px;
    white-space: nowrap;
  }
  .item { height: 20.500px; display: flex; align-items: center; gap: 4px; }
  .item svg { flex: none; }
  .item.off { color: #a3a6aa; }
  .clip .stack { margin-left: 1px; }
  .slides .stack { margin-left: 0; }
  .row1, .row2 { display: flex; align-items: center; }
  .row1 { height: 22px; margin-top: 9px; padding-left: 4px; }
  .row2 { height: 20px; margin-top: 6px; padding-left: 9px; }
  .combo {
    height: 19px;
    background: #f2f3f5;
    border: 1px solid #dfe1e4;
    box-sizing: border-box;
    display: flex;
    align-items: center;
    justify-content: flex-end;
    padding-right: 3px;
    color: #aaa;
  }
  .combo.name { width: 98px; }
  .combo.size { width: 36px; justify-content: space-between; padding-left: 3px; margin-left: -1px; }
  .fa { font-family: "Liberation Serif", serif; color: #777; font-weight: bold; white-space: nowrap; }
  .fa sup { font-size: 6px; }
  .big-a { font-size: 14px; margin-left: 5px; }
  .small-a { font-size: 11px; margin-left: 8px; }
  .row1 .vsep.tall { height: 16px; margin: 0 8px 0 7px; }
  .row2 .vsep.tall { height: 16px; }
  .f {
    font-family: "Liberation Serif", serif;
    font-size: 12px;
    color: #777;
    text-align: center;
    width: 21.500px;
    flex: none;
  }
  .strong { font-weight: bold; }
  .abe { font-size: 10px; }
  .av { font-size: 9px; width: 23px; line-height: 8px; display: flex; flex-direction: column; }
  .av small { font-size: 8px; line-height: 6px; }
  .aa { margin-left: 6px; }
  .font .row2 .vsep { margin: 0 6px; }
  .acol { font-size: 15px; font-weight: bold; width: 16px; }
  .pcol { width: 179px; }
  .row1.p { padding-left: 6px; }
  .row1.p .caret { margin: 0 5px 0 3px; }
  .row1.p .vsep.tall { margin: 0 7px 0 4px; }
  .row1.p svg + svg { margin-left: 5px; }
  .row2.p { padding-left: 7px; gap: 6px; }
  .row2.p .caret { margin-left: -4px; }
  .row2.p .vsep.tall { margin: 0 1px 0 0; }
  .pil { color: #888; font-size: 10px; width: 15px; white-space: nowrap; letter-spacing: -1px; }
  .narrow { margin-left: 0; padding-left: 6px; }
  .tiny { font: 7px "Liberation Sans", sans-serif; fill: #999; }
  .dk { fill: #666; }
  .gr { fill: #1c8a40; font-weight: bold; }
  .gallery {
    width: 124px;
    height: 55px;
    margin: 5px 0 0 6px;
    background: #fdfdfe;
    border: 1px solid #cfd2d7;
    box-sizing: border-box;
    display: flex;
    flex: none;
  }
  .gallery > svg { flex: none; margin: 1px 0 0 1px; }
  .gal-scroll {
    width: 10px;
    margin-left: auto;
    display: flex;
    flex-direction: column;
    background: #eceef1;
    border-left: 1px solid #d5d8dc;
    font-size: 7px;
    line-height: 17.600px;
    text-align: center;
    color: #666;
  }
  .arrange { width: 48px; margin-left: 0; padding-top: 5px; }
  .quick { width: 42px; padding-top: 6px; color: #a3a6aa; margin-left: 7px; }
  .quick svg { margin-bottom: 5px; }
  .shape { margin-left: 3px; }
  .edit .stack { margin-left: 5px; }

  /* work area */
  .work { flex: 1; display: flex; min-height: 0; }
  .pane {
    width: 194px;
    flex: none;
    background: linear-gradient(#c6c9ce, #b8bcc2);
    display: flex;
    flex-direction: column;
    border-right: 1px solid #8f9399;
    box-sizing: content-box;
  }
  .pane-tabs {
    height: 20px;
    margin-top: 3px;
    display: flex;
    align-items: stretch;
    font-size: 10.500px;
    flex: none;
    position: relative;
  }
  .ptab {
    width: 57px;
    text-align: center;
    line-height: 19px;
    color: #666;
    border-right: 1px solid #a9adb3;
    box-sizing: border-box;
  }
  .ptab.on { background: #d4d7db; color: #444; }
  .pclose { margin: 5px 5px 0 auto; }
  .pane-main { flex: 1; display: flex; min-height: 0; }
  .thumbs {
    width: 178px;
    padding: 7px 0 0 4px;
    box-sizing: border-box;
    display: flex;
    flex-direction: column;
    gap: 12px;
    flex: none;
  }
  .thumb-row {
    height: 113px;
    width: 171px;
    display: flex;
    box-sizing: border-box;
    padding-left: 14px;
    position: relative;
    flex: none;
  }
  .thumb-row.active {
    height: 121px;
    width: 171px;
    margin: -4px 0;
    padding-top: 4px;
    padding-left: 14px;
    background: linear-gradient(90deg, #fbcf55, #fdeb8e);
    border: 1px solid #e1bb52;
    box-sizing: border-box;
    padding-top: 4px;
  }
  .num {
    position: absolute;
    left: 2px;
    top: 3px;
    font: bold 11.500px "Liberation Sans", sans-serif;
    color: #3c3f44;
  }
  .active .num { top: 6px; }
  .mini {
    width: 149px;
    height: 113px;
    background: #fff;
    box-shadow: 0 0 2px #777;
    padding: 2px;
    box-sizing: border-box;
    flex: none;
  }
  .active .mini { margin-left: 3px; height: 111px; }
  .mini-in {
    height: 100%;
    border: 1.200px solid #555;
    border-radius: 5px;
    box-sizing: border-box;
    padding: 7px 4px 0 2px;
    overflow: hidden;
    font-family: "Liberation Serif", serif;
  }
  .mini-title { font-size: 6.100px; font-weight: bold; color: #2a2acb; white-space: nowrap; line-height: 8px; }
  .mini-sub { font-size: 4.500px; font-weight: bold; color: #3030d0; margin-top: 4px; line-height: 6px; }
  .mini-body { font-size: 3.900px; line-height: 7.200px; color: #333; text-align: justify; margin-top: 2px; padding-left: 3px; }
  .mini-body i { font-style: normal; color: #d22; }
  .r { color: #e01818; font-weight: bold; }
  .bl { color: #2a2ad0; font-weight: bold; }
  .mini-chart { width: 120px; margin: 2px 0 0 11px; }
  .mini-chart :global(svg) { display: block; width: 120px; height: 78px; }

  .vscroll {
    display: flex;
    flex-direction: column;
    align-items: center;
    box-sizing: border-box;
    position: relative;
    flex: none;
  }
  .vscroll.small { width: 16px; padding-top: 4px; }
  .arr { width: 0; height: 0; border: 4px solid transparent; flex: none; }
  .arr.up { border-bottom: 4px solid #444; border-top: 0; }
  .arr.down { border-top: 4px solid #444; border-bottom: 0; margin-top: auto; }
  .sthumb {
    width: 12px;
    background: linear-gradient(90deg, #eef0f3, #d9dce0);
    border: 1px solid #9b9fa6;
    border-radius: 2px;
    box-sizing: border-box;
    display: flex;
    align-items: center;
    justify-content: center;
    flex: none;
  }
  .sthumb i { width: 7px; height: 6px; border-top: 1px solid #888; border-bottom: 1px solid #888; display: block; background: linear-gradient(#888, #888) center / 100% 1px no-repeat; }
  .small .sthumb { height: 35px; margin-top: 134px; }
  .small .arr.down { margin-bottom: 7px; }

  .right {
    flex: 1;
    display: flex;
    flex-direction: column;
    min-width: 0;
    margin-left: 4px;
    border-left: 1px solid #9a9ea4;
  }
  .canvas-row { height: 448px; display: flex; flex: none; }
  .canvas {
    flex: 1;
    display: flex;
    justify-content: center;
    padding-top: 20px;
    box-sizing: border-box;
    background: linear-gradient(#d0d3d8, #bbbfc5);
  }
  .slide {
    width: 548px;
    height: 411px;
    background: #fff;
    box-shadow: 0 0 3px #888;
    padding: 3px;
    box-sizing: border-box;
    flex: none;
  }
  .slide-in {
    height: 404px;
    border: 1.500px solid #333;
    border-radius: 20px;
    box-sizing: border-box;
    padding: 26px 0 0 4.500px;
    font-family: "Liberation Serif", serif;
  }
  h1 {
    font-size: 21.500px;
    font-weight: bold;
    color: #1212c8;
    line-height: 24px;
    white-space: nowrap;
  }
  h2 {
    font-size: 17px;
    font-weight: bold;
    color: #1212c8;
    line-height: 20px;
    margin-top: 23px;
    white-space: nowrap;
  }
  .figure { margin: 12px 0 0 39px; width: 444px; height: 292px; }
  .figure :global(svg) { display: block; width: 444px; height: 292px; }
  .chart { font-family: "Liberation Serif", serif; }
  .cap { font: bold 13.600px "Liberation Serif", serif; fill: #222; letter-spacing: .62px; }
  .lbl { font: bold 8.800px "Liberation Serif", serif; fill: #333; letter-spacing: .25px; }
  .pct { font-size: 9.500px; }
  .age { font-size: 9.500px; }
  .tick { font: bold 8.200px "Liberation Serif", serif; fill: #444; letter-spacing: .2px; }
  .copy { font: 3.900px "Liberation Sans", sans-serif; fill: #444; }

  .vscroll.main {
    width: 16px;
    background: #dfe3e9;
    padding-top: 8px;
    border-left: 1px solid #d0d3d8;
  }
  .main .sthumb { height: 15px; margin-top: 120px; }
  .main .arr.down { margin-bottom: 12px; }
  .dbl { display: flex; flex-direction: column; gap: 5px; height: 37px; }
  .dbl svg { display: block; }
  .notes-row {
    flex: 1;
    display: flex;
    min-height: 0;
    border-top: 3px solid #e6e8eb;
    outline: 0;
    box-shadow: inset 0 1px 0 #a7abb1;
  }
  .notes {
    flex: 1;
    background: #fff;
    padding: 6px 0 0 9px;
    font-size: 13.400px;
    color: #3a3a3a;
    border-top: 1px solid #a7abb1;
  }
  .vscroll.note {
    width: 16px;
    background: #e3e6eb;
    padding-top: 5px;
    border-top: 1px solid #a7abb1;
  }
  .note .arr.up { border-bottom-color: #9da1a7; }

  /* status bar */
  .status {
    height: 20px;
    flex: none;
    display: flex;
    align-items: stretch;
    background: linear-gradient(#e2e4e8, #d2d5da);
    border-top: 1px solid #a7abb1;
    box-sizing: border-box;
    font-size: 9.800px;
    color: #5a5e64;
    white-space: nowrap;
  }
  .st { display: flex; align-items: center; border-right: 1px solid #b8bbc0; box-sizing: border-box; }
  .st.a { width: 79px; padding-left: 8px; }
  .st.b { width: 65px; padding-left: 9px; }
  .st.c { border: 0; width: 35px; padding-left: 10px; }
  .st.d { width: 73px; }
  .st-right { margin-left: auto; display: flex; align-items: center; padding-right: 20px; }
  .view.on {
    width: 15px;
    height: 15px;
    background: #fbdc72;
    border: 1px solid #d9a92e;
    box-sizing: border-box;
    display: flex;
    align-items: center;
    justify-content: center;
  }
  .view.on svg { width: 11px; height: 9px; }
  .v2 { margin-left: 10px; }
  .v3 { margin-left: 6px; }
  .v4 { margin-left: 8px; }
  .st-right .pct { font-size: 10px; margin-left: 13px; color: #6a6e74; width: 26px; }
  .zoomb {
    width: 13px;
    height: 13px;
    border-radius: 50%;
    border: 1px solid #9a9ea4;
    background: linear-gradient(90deg, #666, #666) center / 7px 2px no-repeat, #f1f2f4;
    box-sizing: content-box;
    margin-left: 10px;
  }
  .zoomb.plus {
    margin-left: 0;
    background: linear-gradient(90deg, #666, #666) center / 7px 2px no-repeat, linear-gradient(#666, #666) center / 2px 7px no-repeat, #f1f2f4;
  }
  .slider {
    width: 90px;
    height: 1px;
    background: #9a9ea4;
    display: flex;
    align-items: center;
    position: relative;
  }
  .knob {
    position: absolute;
    left: 27px;
    top: -6px;
    width: 8px;
    height: 11px;
    background: #f4f5f7;
    border: 1px solid #8d9197;
    border-radius: 2px 2px 4px 4px;
    box-sizing: border-box;
  }
  .tick { position: absolute; left: 43px; top: -3px; width: 1px; height: 7px; background: #9a9ea4; }
  .fit { margin-left: 6px; }

  /* taskbar */
  .taskbar {
    display: flex;
    align-items: stretch;
    background: #1a2a3b;
    color: #fff;
    font-size: 12px;
    height: 36px;
  }
  .start { width: 46px; display: flex; align-items: center; justify-content: center; flex: none; }
  .search {
    width: 313px;
    background: #f1f1f1;
    color: #222;
    display: flex;
    align-items: center;
    gap: 8px;
    padding-left: 9px;
    box-sizing: border-box;
    font-size: 13.500px;
    flex: none;
  }
  .tb-icons { display: flex; flex: none; padding-left: -1px; }
  .tb {
    width: 45px;
    display: flex;
    align-items: center;
    justify-content: center;
    border-bottom: 2px solid transparent;
    box-sizing: border-box;
  }
  .tb:nth-child(n+3) { border-bottom-color: #7ab5da; }
  .tb:nth-child(3), .tb:nth-child(2) { border-bottom-color: transparent; }
  .tb.on { background: #46525e; }
  .e { font: bold 7px "Liberation Sans", sans-serif; fill: #fff; }
  .pp { font: bold 15px "Liberation Sans", sans-serif; fill: #d24a24; }
  .tray {
    margin-left: auto;
    display: flex;
    align-items: center;
    padding-right: 17px;
    flex: none;
  }
  .t-batt { margin-left: 12px; }
  .t-wifi { margin-left: 10px; }
  .t-vol { margin-left: 9px; }
  .eng { margin-left: 14px; font-size: 11.500px; }
  .clock {
    display: flex;
    flex-direction: column;
    align-items: center;
    font-size: 11.500px;
    line-height: 17px;
    margin-left: 13px;
    width: 55px;
  }
  .t-note { margin-left: 18px; }
  .badge { font: 9px "Liberation Sans", sans-serif; fill: #fff; }
</style>
